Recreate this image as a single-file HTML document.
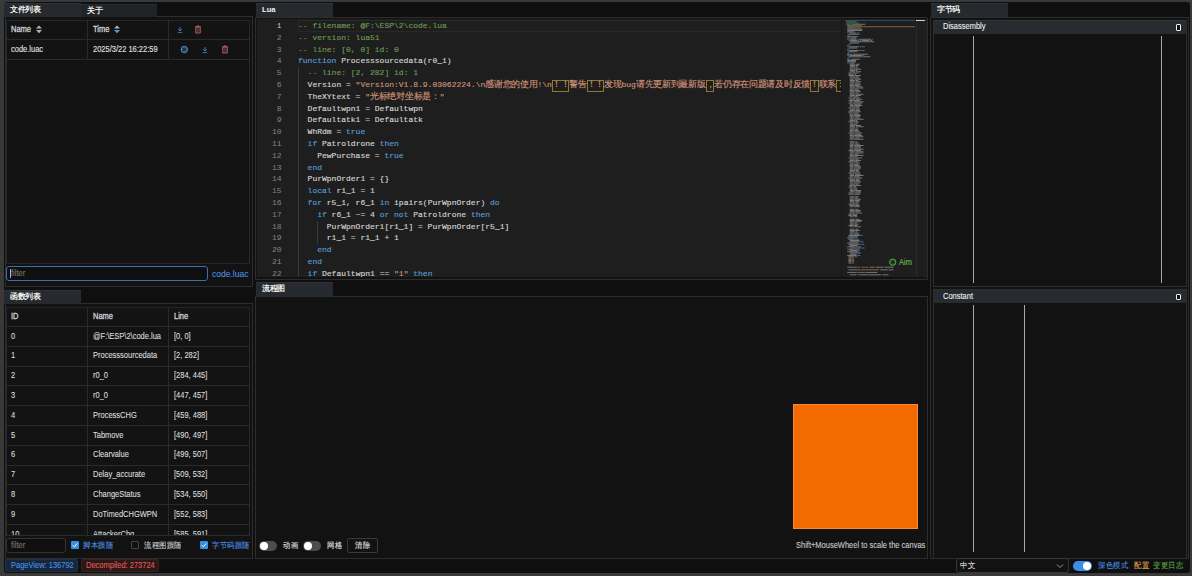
<!DOCTYPE html><html><head><meta charset="utf-8"><style>
*{box-sizing:border-box;margin:0;padding:0}
html,body{width:1192px;height:576px;overflow:hidden;background:#393939;font-family:"Liberation Sans",sans-serif;color:#dedede}
div,span{position:absolute}
.r{position:relative}
.bx{border:1px solid #2d2d2d}
.tab{background:#262a2e;font-size:7.6px;font-weight:bold;color:#f2f2f2;line-height:12px;padding-left:6px;white-space:nowrap;border-top:1px solid #30343a}
.tab.in{background:#212427;border-top:1px solid #2a2d31}
.t{font-size:8.2px;line-height:9px;white-space:nowrap;color:#e2e2e2;-webkit-text-stroke:0.1px currentColor;transform:scaleX(0.915);transform-origin:0 50%}
.hl{height:1px;background:#2a2a2a}
.vl{width:1px;background:#2a2a2a}
.code{font-family:"Liberation Mono",monospace;font-size:8px;line-height:11.8px;white-space:pre;color:#d4d4d4;-webkit-text-stroke:0.15px currentColor}
.ln{font-family:"Liberation Mono",monospace;font-size:8px;line-height:11.8px;white-space:pre;color:#858585;text-align:right;width:24.5px}
.c{color:#6a9955}.k{color:#569cd6}.s{color:#ce9178}.f{color:#dcdcaa}
.cj{position:relative;display:inline-block;width:1em;text-align:center}
.code .cj{width:8.71px}
.ub{outline:1px solid #8d7b2c;outline-offset:-1px;color:#ce9178}
</style></head><body>
<div style="left:4px;top:2px;width:1186px;height:571px;background:#0f0f0f;border-radius:3px"></div>
<div class="bx" style="left:5px;top:16px;width:248px;height:271px;background:#121212"></div>
<div class="tab" style="left:4px;top:3px;width:77px;height:14px"><span class="cj">文</span><span class="cj">件</span><span class="cj">列</span><span class="cj">表</span></div>
<div class="tab in" style="left:81px;top:4px;width:76px;height:13px"><span class="cj">关</span><span class="cj">于</span></div>
<div style="left:6px;top:20px;width:244px;height:244px;border:1px solid #262626;background:#131313"></div>
<div class="hl" style="left:6px;top:39px;width:244px"></div>
<div class="hl" style="left:6px;top:59px;width:244px"></div>
<div class="vl" style="left:87px;top:20px;height:40px"></div>
<div class="vl" style="left:168px;top:20px;height:40px"></div>
<div class="t" style="left:11px;top:25px;color:#d0d3dc;-webkit-text-stroke:0.3px #d0d3dc">Name</div>
<div class="t" style="left:93px;top:25px;color:#d0d3dc;-webkit-text-stroke:0.3px #d0d3dc">Time</div>
<div class="t" style="left:11px;top:45px">code.luac</div>
<div class="t" style="left:93px;top:45px">2025/3/22 16:22:59</div>
<svg style="position:absolute;left:35.0px;top:25.0px" width="8" height="9"><path d="M1 3.6 L4 0.4 L7 3.6Z" fill="#b4b4b4"/><path d="M1 5 L4 8.2 L7 5Z" fill="#b4b4b4"/></svg>
<svg style="position:absolute;left:113.0px;top:25.0px" width="8" height="9"><path d="M1 3.6 L4 0.4 L7 3.6Z" fill="#b4b4b4"/><path d="M1 5 L4 8.2 L7 5Z" fill="#4a9ef0"/></svg>
<svg style="position:absolute;left:175.5px;top:25.5px" width="8" height="8"><path d="M4 1 V5 M2.3 3.3 L4 5 L5.7 3.3" stroke="#4a88cc" stroke-width="0.9" fill="none"/><path d="M1.8 6.6 H6.2" stroke="#4a88cc" stroke-width="0.8"/></svg>
<svg style="position:absolute;left:194.0px;top:25.0px" width="8" height="9"><path d="M1.7 2.2 H6.3 V8 H1.7Z" stroke="#b85a5a" stroke-width="0.9" fill="#3a2828"/><path d="M1.1 1.6 H6.9 M3 0.8 H5" stroke="#b85a5a" stroke-width="0.9"/><path d="M3 4.2 H5 M3 5.8 H5" stroke="#6a4a4a" stroke-width="0.7"/></svg>
<svg style="position:absolute;left:180px;top:45px" width="9" height="9"><circle cx="4.3" cy="4.5" r="3.2" fill="#34587e" stroke="#4f88c4" stroke-width="1"/><path d="M2.6 2.8 L6 6.2 M6 2.8 L2.6 6.2" stroke="#0d1620" stroke-width="1"/></svg>
<svg style="position:absolute;left:200.5px;top:45.5px" width="8" height="8"><path d="M4 1 V5 M2.3 3.3 L4 5 L5.7 3.3" stroke="#4a88cc" stroke-width="0.9" fill="none"/><path d="M1.8 6.6 H6.2" stroke="#4a88cc" stroke-width="0.8"/></svg>
<svg style="position:absolute;left:221.0px;top:45.0px" width="8" height="9"><path d="M1.7 2.2 H6.3 V8 H1.7Z" stroke="#b85a5a" stroke-width="0.9" fill="#3a2828"/><path d="M1.1 1.6 H6.9 M3 0.8 H5" stroke="#b85a5a" stroke-width="0.9"/><path d="M3 4.2 H5 M3 5.8 H5" stroke="#6a4a4a" stroke-width="0.7"/></svg>
<div style="left:6px;top:266px;width:202px;height:15px;border:1px solid #3b6fb0;border-radius:3px;background:#0f0f0f"></div>
<div class="t" style="left:11px;top:269px;color:#777">filter</div>
<div class="t" style="left:212px;top:269.5px;color:#4d8ee0;font-size:9.3px">code.luac</div>
<div style="left:10px;top:269px;width:1px;height:9px;background:#bbb"></div>
<div class="bx" style="left:5px;top:303px;width:248px;height:256px;background:#121212"></div>
<div class="tab" style="left:4px;top:290px;width:77px;height:14px"><span class="cj">函</span><span class="cj">数</span><span class="cj">列</span><span class="cj">表</span></div>
<div style="left:6px;top:307px;width:244px;height:229px;border:1px solid #262626;background:#131313;overflow:hidden"></div>
<div class="t" style="left:11px;top:312.0px;color:#d0d3dc;-webkit-text-stroke:0.3px #d0d3dc">ID</div>
<div class="t" style="left:93px;top:312.0px;color:#d0d3dc;-webkit-text-stroke:0.3px #d0d3dc">Name</div>
<div class="t" style="left:174px;top:312.0px;color:#d0d3dc;-webkit-text-stroke:0.3px #d0d3dc">Line</div>
<div class="t" style="left:11px;top:331.5px;color:#dcdcdc">0</div>
<div class="t" style="left:93px;top:331.5px;color:#dcdcdc">@F:\ESP\2\code.lua</div>
<div class="t" style="left:174px;top:331.5px;color:#dcdcdc">[0, 0]</div>
<div class="hl" style="left:6px;top:326.0px;width:244px"></div>
<div class="t" style="left:11px;top:351.3px;color:#dcdcdc">1</div>
<div class="t" style="left:93px;top:351.3px;color:#dcdcdc">Processsourcedata</div>
<div class="t" style="left:174px;top:351.3px;color:#dcdcdc">[2, 282]</div>
<div class="hl" style="left:6px;top:345.8px;width:244px"></div>
<div class="t" style="left:11px;top:371.1px;color:#dcdcdc">2</div>
<div class="t" style="left:93px;top:371.1px;color:#dcdcdc">r0_0</div>
<div class="t" style="left:174px;top:371.1px;color:#dcdcdc">[284, 445]</div>
<div class="hl" style="left:6px;top:365.6px;width:244px"></div>
<div class="t" style="left:11px;top:390.9px;color:#dcdcdc">3</div>
<div class="t" style="left:93px;top:390.9px;color:#dcdcdc">r0_0</div>
<div class="t" style="left:174px;top:390.9px;color:#dcdcdc">[447, 457]</div>
<div class="hl" style="left:6px;top:385.4px;width:244px"></div>
<div class="t" style="left:11px;top:410.7px;color:#dcdcdc">4</div>
<div class="t" style="left:93px;top:410.7px;color:#dcdcdc">ProcessCHG</div>
<div class="t" style="left:174px;top:410.7px;color:#dcdcdc">[459, 488]</div>
<div class="hl" style="left:6px;top:405.2px;width:244px"></div>
<div class="t" style="left:11px;top:430.5px;color:#dcdcdc">5</div>
<div class="t" style="left:93px;top:430.5px;color:#dcdcdc">Tabmove</div>
<div class="t" style="left:174px;top:430.5px;color:#dcdcdc">[490, 497]</div>
<div class="hl" style="left:6px;top:425.0px;width:244px"></div>
<div class="t" style="left:11px;top:450.3px;color:#dcdcdc">6</div>
<div class="t" style="left:93px;top:450.3px;color:#dcdcdc">Clearvalue</div>
<div class="t" style="left:174px;top:450.3px;color:#dcdcdc">[499, 507]</div>
<div class="hl" style="left:6px;top:444.8px;width:244px"></div>
<div class="t" style="left:11px;top:470.1px;color:#dcdcdc">7</div>
<div class="t" style="left:93px;top:470.1px;color:#dcdcdc">Delay_accurate</div>
<div class="t" style="left:174px;top:470.1px;color:#dcdcdc">[509, 532]</div>
<div class="hl" style="left:6px;top:464.6px;width:244px"></div>
<div class="t" style="left:11px;top:489.9px;color:#dcdcdc">8</div>
<div class="t" style="left:93px;top:489.9px;color:#dcdcdc">ChangeStatus</div>
<div class="t" style="left:174px;top:489.9px;color:#dcdcdc">[534, 550]</div>
<div class="hl" style="left:6px;top:484.4px;width:244px"></div>
<div class="t" style="left:11px;top:509.7px;color:#dcdcdc">9</div>
<div class="t" style="left:93px;top:509.7px;color:#dcdcdc">DoTimedCHGWPN</div>
<div class="t" style="left:174px;top:509.7px;color:#dcdcdc">[552, 583]</div>
<div class="hl" style="left:6px;top:504.2px;width:244px"></div>
<div class="t" style="left:11px;top:529.5px;color:#dcdcdc">10</div>
<div class="t" style="left:93px;top:529.5px;color:#dcdcdc">AttackerChg</div>
<div class="t" style="left:174px;top:529.5px;color:#dcdcdc">[585, 591]</div>
<div class="hl" style="left:6px;top:524.0px;width:244px"></div>
<div class="vl" style="left:87px;top:307px;height:229px"></div>
<div class="vl" style="left:168px;top:307px;height:229px"></div>
<div style="left:6px;top:536px;width:244px;height:21px;background:#121212"></div>
<div class="hl" style="left:6px;top:535px;width:244px"></div>
<div style="left:6px;top:538px;width:60px;height:15px;border:1px solid #333;border-radius:3px;background:#0f0f0f"></div>
<div class="t" style="left:11px;top:541px;color:#777">filter</div>
<div style="left:71px;top:541px;width:8px;height:8px;background:#3a8ee6;border-radius:1px"></div>
<svg style="position:absolute;left:71px;top:541px" width="8" height="8"><path d="M1.8 4.2 L3.4 5.8 L6.3 2.4" stroke="#fff" stroke-width="1" fill="none"/></svg>
<div class="t" style="left:83px;top:541px;color:#4d8ee0"><span class="cj">脚</span><span class="cj">本</span><span class="cj">跟</span><span class="cj">随</span></div>
<div style="left:131px;top:541px;width:8px;height:8px;border:1px solid #444;border-radius:1px;background:#111"></div>
<div class="t" style="left:144px;top:541px;color:#cfcfcf"><span class="cj">流</span><span class="cj">程</span><span class="cj">图</span><span class="cj">跟</span><span class="cj">随</span></div>
<div style="left:200px;top:541px;width:8px;height:8px;background:#3a8ee6;border-radius:1px"></div>
<svg style="position:absolute;left:200px;top:541px" width="8" height="8"><path d="M1.8 4.2 L3.4 5.8 L6.3 2.4" stroke="#fff" stroke-width="1" fill="none"/></svg>
<div class="t" style="left:212px;top:541px;color:#4d8ee0"><span class="cj">字</span><span class="cj">节</span><span class="cj">码</span><span class="cj">跟</span><span class="cj">随</span></div>
<div class="bx" style="left:255px;top:17px;width:673px;height:263px;background:#121212;border-radius:0 2px 0 0"></div>
<div class="tab" style="left:256px;top:3px;width:77px;height:14px;font-weight:bold">Lua</div>
<div style="left:257px;top:19px;width:659px;height:258px;background:#1e1e1e;overflow:hidden" id="ed"></div>
<div style="left:257px;top:19px;width:659px;height:258px;overflow:hidden">
<div style="left:41px;top:1px;width:546px;height:11.8px;border:1px solid #282828"></div>
<div style="left:41px;top:48.2px;width:1px;height:220px;background:#3a3a3a"></div>
<div style="left:60.2px;top:201.60px;width:1px;height:23.6px;background:#3a3a3a"></div>
<div class="ln" style="left:0px;top:1.00px;color:#c6c6c6">1</div>
<div class="code" style="left:41px;top:1.00px"><span class="r c">-- filename: @F:\ESP\2\code.lua</span></div>
<div class="ln" style="left:0px;top:12.80px;color:#858585">2</div>
<div class="code" style="left:41px;top:12.80px"><span class="r c">-- version: lua51</span></div>
<div class="ln" style="left:0px;top:24.60px;color:#858585">3</div>
<div class="code" style="left:41px;top:24.60px"><span class="r c">-- line: [0, 0] id: 0</span></div>
<div class="ln" style="left:0px;top:36.40px;color:#858585">4</div>
<div class="code" style="left:41px;top:36.40px"><span class="r k">function</span> Processsourcedata(r0_1)</div>
<div class="ln" style="left:0px;top:48.20px;color:#858585">5</div>
<div class="code" style="left:41px;top:48.20px">  <span class="r c">-- line: [2, 282] id: 1</span></div>
<div class="ln" style="left:0px;top:60.00px;color:#858585">6</div>
<div class="code" style="left:41px;top:60.00px">  Version = <span class="r s">&quot;Version:V1.8.9.03062224.\n<span class="r" style="font-size:8.7px"><span class="cj">感</span><span class="cj">谢</span><span class="cj">您</span><span class="cj">的</span><span class="cj">使</span><span class="cj">用</span></span>!\n</span><span class="r ub"><span class="r" style="font-size:8.7px"><span class="cj">！</span><span class="cj">！</span></span></span><span class="r s"><span class="r" style="font-size:8.7px"><span class="cj">警</span><span class="cj">告</span></span></span><span class="r ub"><span class="r" style="font-size:8.7px"><span class="cj">！</span><span class="cj">！</span></span></span><span class="r s"><span class="r" style="font-size:8.7px"><span class="cj">发</span><span class="cj">现</span></span>bug<span class="r" style="font-size:8.7px"><span class="cj">请</span><span class="cj">先</span><span class="cj">更</span><span class="cj">新</span><span class="cj">到</span><span class="cj">最</span><span class="cj">新</span><span class="cj">版</span></span></span><span class="r ub"><span class="r" style="font-size:8.7px"><span class="cj">，</span></span></span><span class="r s"><span class="r" style="font-size:8.7px"><span class="cj">若</span><span class="cj">仍</span><span class="cj">存</span><span class="cj">在</span><span class="cj">问</span><span class="cj">题</span><span class="cj">请</span><span class="cj">及</span><span class="cj">时</span><span class="cj">反</span><span class="cj">馈</span></span></span><span class="r ub"><span class="r" style="font-size:8.7px"><span class="cj">！</span></span></span><span class="r s"><span class="r" style="font-size:8.7px"><span class="cj">联</span><span class="cj">系</span></span></span><span class="r ub"><span class="r" style="font-size:8.7px"><span class="cj">：</span></span></span><span class="r s">QQ<span class="r" style="font-size:8.7px"><span class="cj">群</span></span></span></div>
<div class="ln" style="left:0px;top:71.80px;color:#858585">7</div>
<div class="code" style="left:41px;top:71.80px">  TheXYtext = <span class="r s">&quot;<span class="r" style="font-size:8.7px"><span class="cj">光</span><span class="cj">标</span><span class="cj">绝</span><span class="cj">对</span><span class="cj">坐</span><span class="cj">标</span><span class="cj">是</span><span class="cj">：</span></span>&quot;</span></div>
<div class="ln" style="left:0px;top:83.60px;color:#858585">8</div>
<div class="code" style="left:41px;top:83.60px">  Defaultwpn1 = Defaultwpn</div>
<div class="ln" style="left:0px;top:95.40px;color:#858585">9</div>
<div class="code" style="left:41px;top:95.40px">  Defaultatk1 = Defaultatk</div>
<div class="ln" style="left:0px;top:107.20px;color:#858585">10</div>
<div class="code" style="left:41px;top:107.20px">  WhRdm = <span class="r k">true</span></div>
<div class="ln" style="left:0px;top:119.00px;color:#858585">11</div>
<div class="code" style="left:41px;top:119.00px">  <span class="r k">if</span> Patroldrone <span class="r k">then</span></div>
<div class="ln" style="left:0px;top:130.80px;color:#858585">12</div>
<div class="code" style="left:41px;top:130.80px">    PewPurchase = <span class="r k">true</span></div>
<div class="ln" style="left:0px;top:142.60px;color:#858585">13</div>
<div class="code" style="left:41px;top:142.60px">  <span class="r k">end</span></div>
<div class="ln" style="left:0px;top:154.40px;color:#858585">14</div>
<div class="code" style="left:41px;top:154.40px">  PurWpnOrder1 = {}</div>
<div class="ln" style="left:0px;top:166.20px;color:#858585">15</div>
<div class="code" style="left:41px;top:166.20px">  <span class="r k">local</span> r1_1 = 1</div>
<div class="ln" style="left:0px;top:178.00px;color:#858585">16</div>
<div class="code" style="left:41px;top:178.00px">  <span class="r k">for</span> r5_1, r6_1 <span class="r k">in</span> ipairs(PurWpnOrder) <span class="r k">do</span></div>
<div class="ln" style="left:0px;top:189.80px;color:#858585">17</div>
<div class="code" style="left:41px;top:189.80px">    <span class="r k">if</span> r6_1 ~= 4 <span class="r k">or</span> <span class="r k">not</span> Patroldrone <span class="r k">then</span></div>
<div class="ln" style="left:0px;top:201.60px;color:#858585">18</div>
<div class="code" style="left:41px;top:201.60px">      PurWpnOrder1[r1_1] = PurWpnOrder[r5_1]</div>
<div class="ln" style="left:0px;top:213.40px;color:#858585">19</div>
<div class="code" style="left:41px;top:213.40px">      r1_1 = r1_1 + 1</div>
<div class="ln" style="left:0px;top:225.20px;color:#858585">20</div>
<div class="code" style="left:41px;top:225.20px">    <span class="r k">end</span></div>
<div class="ln" style="left:0px;top:237.00px;color:#858585">21</div>
<div class="code" style="left:41px;top:237.00px">  <span class="r k">end</span></div>
<div class="ln" style="left:0px;top:248.80px;color:#858585">22</div>
<div class="code" style="left:41px;top:248.80px">  <span class="r k">if</span> Defaultwpn1 == <span class="r s">&quot;1&quot;</span> <span class="r k">then</span></div>
<div class="ln" style="left:0px;top:260.60px;color:#858585">23</div>
<div class="code" style="left:41px;top:260.60px">    Defaultwpn = 1</div>
</div>
<div style="left:916px;top:19px;width:11px;height:258px;background:#1e1e1e;border-left:1px solid #2a2a2a"></div>
<div style="left:841px;top:19px;width:75px;height:258px;background:#1e1e1e;border-left:1px solid #181818"></div>
<div style="left:845px;top:19px;width:71px;height:258px;overflow:hidden"><div style="left:-845px;top:-19px;width:1192px;height:576px"><svg style="position:absolute;left:0;top:0" width="1192" height="576"><rect x="846.00" y="20.00" width="19.38" height="1" fill="#5f8a4e" opacity="0.7"/><rect x="846.00" y="21.25" width="10.62" height="1" fill="#5f8a4e" opacity="0.7"/><rect x="846.00" y="22.50" width="13.12" height="1" fill="#5f8a4e" opacity="0.7"/><rect x="846.00" y="23.75" width="5.00" height="1" fill="#4f8ccc" opacity="0.7"/><rect x="851.62" y="23.75" width="13.75" height="1" fill="#9b9b9b" opacity="0.7"/><rect x="847.25" y="25.00" width="14.38" height="1" fill="#5f8a4e" opacity="0.7"/><rect x="847.25" y="26.25" width="6.25" height="1" fill="#9b9b9b" opacity="0.7"/><rect x="853.50" y="26.25" width="61.50" height="1" fill="#b77a5e" opacity="0.7"/><rect x="847.25" y="27.50" width="7.50" height="1" fill="#9b9b9b" opacity="0.7"/><rect x="854.75" y="27.50" width="6.25" height="1" fill="#b77a5e" opacity="0.7"/><rect x="847.25" y="28.75" width="15.00" height="1" fill="#9b9b9b" opacity="0.7"/><rect x="847.25" y="30.00" width="15.00" height="1" fill="#9b9b9b" opacity="0.7"/><rect x="847.25" y="31.25" width="5.00" height="1" fill="#9b9b9b" opacity="0.7"/><rect x="852.25" y="31.25" width="2.50" height="1" fill="#4f8ccc" opacity="0.7"/><rect x="847.25" y="32.50" width="1.25" height="1" fill="#4f8ccc" opacity="0.7"/><rect x="849.12" y="32.50" width="6.88" height="1" fill="#9b9b9b" opacity="0.7"/><rect x="856.62" y="32.50" width="2.50" height="1" fill="#4f8ccc" opacity="0.7"/><rect x="848.50" y="33.75" width="8.75" height="1" fill="#9b9b9b" opacity="0.7"/><rect x="857.25" y="33.75" width="2.50" height="1" fill="#4f8ccc" opacity="0.7"/><rect x="847.25" y="35.00" width="1.88" height="1" fill="#4f8ccc" opacity="0.7"/><rect x="847.25" y="36.25" width="10.62" height="1" fill="#9b9b9b" opacity="0.7"/><rect x="847.25" y="37.50" width="3.12" height="1" fill="#4f8ccc" opacity="0.7"/><rect x="851.00" y="37.50" width="5.00" height="1" fill="#9b9b9b" opacity="0.7"/><rect x="847.25" y="38.75" width="1.88" height="1" fill="#4f8ccc" opacity="0.7"/><rect x="849.75" y="38.75" width="6.88" height="1" fill="#9b9b9b" opacity="0.7"/><rect x="857.25" y="38.75" width="1.25" height="1" fill="#4f8ccc" opacity="0.7"/><rect x="859.12" y="38.75" width="11.88" height="1" fill="#9b9b9b" opacity="0.7"/><rect x="871.62" y="38.75" width="1.25" height="1" fill="#4f8ccc" opacity="0.7"/><rect x="848.50" y="40.00" width="1.25" height="1" fill="#4f8ccc" opacity="0.7"/><rect x="850.38" y="40.00" width="6.88" height="1" fill="#9b9b9b" opacity="0.7"/><rect x="857.88" y="40.00" width="1.25" height="1" fill="#4f8ccc" opacity="0.7"/><rect x="859.75" y="40.00" width="1.88" height="1" fill="#4f8ccc" opacity="0.7"/><rect x="862.25" y="40.00" width="6.88" height="1" fill="#9b9b9b" opacity="0.7"/><rect x="869.75" y="40.00" width="2.50" height="1" fill="#4f8ccc" opacity="0.7"/><rect x="849.75" y="41.25" width="24.38" height="1" fill="#9b9b9b" opacity="0.7"/><rect x="849.75" y="42.50" width="9.38" height="1" fill="#9b9b9b" opacity="0.7"/><rect x="848.50" y="43.75" width="1.88" height="1" fill="#4f8ccc" opacity="0.7"/><rect x="847.25" y="45.00" width="1.88" height="1" fill="#4f8ccc" opacity="0.7"/><rect x="847.25" y="46.25" width="1.25" height="1" fill="#4f8ccc" opacity="0.7"/><rect x="849.12" y="46.25" width="10.00" height="1" fill="#9b9b9b" opacity="0.7"/><rect x="859.75" y="46.25" width="1.88" height="1" fill="#b77a5e" opacity="0.7"/><rect x="862.25" y="46.25" width="2.50" height="1" fill="#4f8ccc" opacity="0.7"/><rect x="848.50" y="47.50" width="8.75" height="1" fill="#9b9b9b" opacity="0.7"/><rect x="847.25" y="48.75" width="1.88" height="1" fill="#4f8ccc" opacity="0.7"/><rect x="847.25" y="50.00" width="1.25" height="1" fill="#4f8ccc" opacity="0.7"/><rect x="849.12" y="50.00" width="10.00" height="1" fill="#9b9b9b" opacity="0.7"/><rect x="859.75" y="50.00" width="1.88" height="1" fill="#b77a5e" opacity="0.7"/><rect x="862.25" y="50.00" width="2.50" height="1" fill="#4f8ccc" opacity="0.7"/><rect x="848.50" y="51.25" width="8.75" height="1" fill="#9b9b9b" opacity="0.7"/><rect x="847.25" y="52.50" width="1.88" height="1" fill="#4f8ccc" opacity="0.7"/><rect x="847.25" y="53.75" width="5.00" height="1" fill="#9b9b9b" opacity="0.7"/><rect x="852.88" y="53.75" width="15.00" height="1" fill="#9b9b9b" opacity="0.7"/><rect x="847.25" y="55.00" width="1.88" height="1" fill="#4f8ccc" opacity="0.7"/><rect x="849.75" y="55.00" width="12.50" height="1" fill="#9b9b9b" opacity="0.7"/><rect x="862.88" y="55.00" width="1.25" height="1" fill="#4f8ccc" opacity="0.7"/><rect x="848.50" y="56.25" width="13.75" height="1" fill="#9b9b9b" opacity="0.7"/><rect x="862.88" y="56.25" width="7.50" height="1" fill="#9b9b9b" opacity="0.7"/><rect x="847.25" y="57.50" width="1.88" height="1" fill="#4f8ccc" opacity="0.7"/><rect x="847.25" y="58.75" width="3.12" height="1" fill="#4f8ccc" opacity="0.7"/><rect x="851.00" y="58.75" width="8.75" height="1" fill="#9b9b9b" opacity="0.7"/><rect x="847.25" y="60.00" width="8.75" height="1" fill="#9b9b9b" opacity="0.7"/><rect x="847.25" y="61.25" width="8.75" height="1" fill="#9b9b9b" opacity="0.7"/><rect x="847.25" y="62.50" width="1.88" height="1" fill="#4f8ccc" opacity="0.7"/><rect x="849.75" y="62.50" width="5.00" height="1" fill="#9b9b9b" opacity="0.7"/><rect x="849.75" y="63.75" width="5.00" height="1" fill="#9b9b9b" opacity="0.7"/><rect x="855.38" y="63.75" width="4.38" height="1" fill="#9b9b9b" opacity="0.7"/><rect x="849.75" y="65.00" width="5.62" height="1" fill="#9b9b9b" opacity="0.7"/><rect x="856.00" y="65.00" width="2.50" height="1" fill="#9b9b9b" opacity="0.7"/><rect x="849.75" y="66.25" width="5.62" height="1" fill="#9b9b9b" opacity="0.7"/><rect x="856.00" y="66.25" width="1.25" height="1" fill="#9b9b9b" opacity="0.7"/><rect x="849.75" y="67.50" width="5.00" height="1" fill="#9b9b9b" opacity="0.7"/><rect x="855.38" y="67.50" width="3.12" height="1" fill="#9b9b9b" opacity="0.7"/><rect x="849.75" y="68.75" width="3.12" height="1" fill="#9b9b9b" opacity="0.7"/><rect x="853.50" y="68.75" width="7.50" height="1" fill="#9b9b9b" opacity="0.7"/><rect x="849.75" y="70.00" width="5.62" height="1" fill="#9b9b9b" opacity="0.7"/><rect x="856.00" y="70.00" width="1.25" height="1" fill="#9b9b9b" opacity="0.7"/><rect x="849.75" y="71.25" width="5.62" height="1" fill="#9b9b9b" opacity="0.7"/><rect x="856.00" y="71.25" width="5.00" height="1" fill="#9b9b9b" opacity="0.7"/><rect x="848.50" y="72.50" width="3.12" height="1" fill="#9b9b9b" opacity="0.7"/><rect x="852.25" y="72.50" width="6.25" height="1" fill="#9b9b9b" opacity="0.7"/><rect x="848.50" y="73.75" width="5.62" height="1" fill="#9b9b9b" opacity="0.7"/><rect x="854.75" y="73.75" width="1.25" height="1" fill="#9b9b9b" opacity="0.7"/><rect x="848.50" y="75.00" width="5.00" height="1" fill="#9b9b9b" opacity="0.7"/><rect x="854.12" y="75.00" width="6.88" height="1" fill="#9b9b9b" opacity="0.7"/><rect x="849.75" y="76.25" width="5.62" height="1" fill="#9b9b9b" opacity="0.7"/><rect x="856.00" y="76.25" width="2.50" height="1" fill="#9b9b9b" opacity="0.7"/><rect x="849.75" y="77.50" width="3.12" height="1" fill="#9b9b9b" opacity="0.7"/><rect x="853.50" y="77.50" width="6.25" height="1" fill="#9b9b9b" opacity="0.7"/><rect x="849.75" y="78.75" width="4.38" height="1" fill="#9b9b9b" opacity="0.7"/><rect x="854.75" y="78.75" width="6.25" height="1" fill="#9b9b9b" opacity="0.7"/><rect x="849.75" y="80.00" width="5.62" height="1" fill="#9b9b9b" opacity="0.7"/><rect x="856.00" y="80.00" width="2.50" height="1" fill="#9b9b9b" opacity="0.7"/><rect x="849.75" y="81.25" width="5.00" height="1" fill="#9b9b9b" opacity="0.7"/><rect x="855.38" y="81.25" width="5.62" height="1" fill="#9b9b9b" opacity="0.7"/><rect x="849.75" y="82.50" width="4.38" height="1" fill="#9b9b9b" opacity="0.7"/><rect x="854.75" y="82.50" width="5.00" height="1" fill="#9b9b9b" opacity="0.7"/><rect x="849.75" y="83.75" width="4.38" height="1" fill="#9b9b9b" opacity="0.7"/><rect x="854.75" y="83.75" width="6.25" height="1" fill="#9b9b9b" opacity="0.7"/><rect x="849.75" y="85.00" width="3.75" height="1" fill="#9b9b9b" opacity="0.7"/><rect x="854.12" y="85.00" width="5.62" height="1" fill="#9b9b9b" opacity="0.7"/><rect x="849.75" y="86.25" width="5.62" height="1" fill="#9b9b9b" opacity="0.7"/><rect x="856.00" y="86.25" width="6.25" height="1" fill="#9b9b9b" opacity="0.7"/><rect x="849.75" y="87.50" width="5.00" height="1" fill="#9b9b9b" opacity="0.7"/><rect x="855.38" y="87.50" width="8.12" height="1" fill="#9b9b9b" opacity="0.7"/><rect x="849.75" y="88.75" width="3.12" height="1" fill="#9b9b9b" opacity="0.7"/><rect x="853.50" y="88.75" width="5.00" height="1" fill="#9b9b9b" opacity="0.7"/><rect x="849.75" y="90.00" width="4.38" height="1" fill="#9b9b9b" opacity="0.7"/><rect x="854.75" y="90.00" width="5.00" height="1" fill="#9b9b9b" opacity="0.7"/><rect x="849.75" y="91.25" width="5.00" height="1" fill="#9b9b9b" opacity="0.7"/><rect x="855.38" y="91.25" width="5.62" height="1" fill="#9b9b9b" opacity="0.7"/><rect x="849.75" y="92.50" width="5.62" height="1" fill="#9b9b9b" opacity="0.7"/><rect x="856.00" y="92.50" width="2.50" height="1" fill="#9b9b9b" opacity="0.7"/><rect x="849.75" y="93.75" width="4.38" height="1" fill="#9b9b9b" opacity="0.7"/><rect x="854.75" y="93.75" width="8.75" height="1" fill="#9b9b9b" opacity="0.7"/><rect x="849.75" y="95.00" width="5.62" height="1" fill="#9b9b9b" opacity="0.7"/><rect x="856.00" y="95.00" width="5.00" height="1" fill="#9b9b9b" opacity="0.7"/><rect x="849.75" y="96.25" width="3.12" height="1" fill="#9b9b9b" opacity="0.7"/><rect x="853.50" y="96.25" width="5.00" height="1" fill="#9b9b9b" opacity="0.7"/><rect x="848.50" y="97.50" width="3.12" height="1" fill="#9b9b9b" opacity="0.7"/><rect x="852.25" y="97.50" width="7.50" height="1" fill="#9b9b9b" opacity="0.7"/><rect x="849.75" y="98.75" width="5.62" height="1" fill="#9b9b9b" opacity="0.7"/><rect x="856.00" y="98.75" width="6.25" height="1" fill="#9b9b9b" opacity="0.7"/><rect x="848.50" y="100.00" width="4.38" height="1" fill="#9b9b9b" opacity="0.7"/><rect x="853.50" y="100.00" width="6.25" height="1" fill="#9b9b9b" opacity="0.7"/><rect x="849.75" y="101.25" width="3.12" height="1" fill="#9b9b9b" opacity="0.7"/><rect x="853.50" y="101.25" width="10.00" height="1" fill="#9b9b9b" opacity="0.7"/><rect x="848.50" y="102.50" width="3.75" height="1" fill="#9b9b9b" opacity="0.7"/><rect x="852.88" y="102.50" width="9.38" height="1" fill="#9b9b9b" opacity="0.7"/><rect x="849.75" y="103.75" width="3.12" height="1" fill="#9b9b9b" opacity="0.7"/><rect x="853.50" y="103.75" width="7.50" height="1" fill="#9b9b9b" opacity="0.7"/><rect x="849.75" y="105.00" width="3.75" height="1" fill="#9b9b9b" opacity="0.7"/><rect x="854.12" y="105.00" width="8.12" height="1" fill="#9b9b9b" opacity="0.7"/><rect x="849.75" y="106.25" width="5.00" height="1" fill="#9b9b9b" opacity="0.7"/><rect x="855.38" y="106.25" width="4.38" height="1" fill="#9b9b9b" opacity="0.7"/><rect x="848.50" y="107.50" width="3.12" height="1" fill="#9b9b9b" opacity="0.7"/><rect x="852.25" y="107.50" width="7.50" height="1" fill="#9b9b9b" opacity="0.7"/><rect x="849.75" y="108.75" width="5.62" height="1" fill="#9b9b9b" opacity="0.7"/><rect x="856.00" y="108.75" width="3.75" height="1" fill="#9b9b9b" opacity="0.7"/><rect x="849.75" y="110.00" width="5.00" height="1" fill="#9b9b9b" opacity="0.7"/><rect x="855.38" y="110.00" width="4.38" height="1" fill="#9b9b9b" opacity="0.7"/><rect x="848.50" y="111.25" width="5.00" height="1" fill="#9b9b9b" opacity="0.7"/><rect x="854.12" y="111.25" width="6.88" height="1" fill="#9b9b9b" opacity="0.7"/><rect x="848.50" y="112.50" width="3.75" height="1" fill="#9b9b9b" opacity="0.7"/><rect x="852.88" y="112.50" width="5.62" height="1" fill="#9b9b9b" opacity="0.7"/><rect x="849.75" y="113.75" width="3.75" height="1" fill="#9b9b9b" opacity="0.7"/><rect x="854.12" y="113.75" width="5.62" height="1" fill="#9b9b9b" opacity="0.7"/><rect x="849.75" y="115.00" width="3.12" height="1" fill="#9b9b9b" opacity="0.7"/><rect x="853.50" y="115.00" width="7.50" height="1" fill="#9b9b9b" opacity="0.7"/><rect x="849.75" y="116.25" width="4.38" height="1" fill="#9b9b9b" opacity="0.7"/><rect x="854.75" y="116.25" width="5.00" height="1" fill="#9b9b9b" opacity="0.7"/><rect x="849.75" y="117.50" width="5.00" height="1" fill="#9b9b9b" opacity="0.7"/><rect x="855.38" y="117.50" width="4.38" height="1" fill="#9b9b9b" opacity="0.7"/><rect x="849.75" y="118.75" width="3.75" height="1" fill="#9b9b9b" opacity="0.7"/><rect x="854.12" y="118.75" width="9.38" height="1" fill="#9b9b9b" opacity="0.7"/><rect x="849.75" y="120.00" width="5.00" height="1" fill="#9b9b9b" opacity="0.7"/><rect x="855.38" y="120.00" width="1.88" height="1" fill="#9b9b9b" opacity="0.7"/><rect x="848.50" y="121.25" width="5.00" height="1" fill="#9b9b9b" opacity="0.7"/><rect x="854.12" y="121.25" width="4.38" height="1" fill="#9b9b9b" opacity="0.7"/><rect x="849.75" y="122.50" width="5.00" height="1" fill="#9b9b9b" opacity="0.7"/><rect x="855.38" y="122.50" width="3.12" height="1" fill="#9b9b9b" opacity="0.7"/><rect x="849.75" y="123.75" width="3.75" height="1" fill="#9b9b9b" opacity="0.7"/><rect x="854.12" y="123.75" width="3.12" height="1" fill="#9b9b9b" opacity="0.7"/><rect x="849.75" y="125.00" width="5.00" height="1" fill="#9b9b9b" opacity="0.7"/><rect x="855.38" y="125.00" width="5.62" height="1" fill="#9b9b9b" opacity="0.7"/><rect x="849.75" y="126.25" width="5.62" height="1" fill="#9b9b9b" opacity="0.7"/><rect x="856.00" y="126.25" width="7.50" height="1" fill="#9b9b9b" opacity="0.7"/><rect x="849.75" y="127.50" width="5.62" height="1" fill="#9b9b9b" opacity="0.7"/><rect x="856.00" y="127.50" width="1.25" height="1" fill="#9b9b9b" opacity="0.7"/><rect x="849.75" y="128.75" width="4.38" height="1" fill="#9b9b9b" opacity="0.7"/><rect x="854.75" y="128.75" width="3.75" height="1" fill="#9b9b9b" opacity="0.7"/><rect x="849.75" y="130.00" width="3.75" height="1" fill="#9b9b9b" opacity="0.7"/><rect x="854.12" y="130.00" width="4.38" height="1" fill="#9b9b9b" opacity="0.7"/><rect x="849.75" y="131.25" width="4.38" height="1" fill="#9b9b9b" opacity="0.7"/><rect x="854.75" y="131.25" width="5.00" height="1" fill="#9b9b9b" opacity="0.7"/><rect x="848.50" y="132.50" width="5.00" height="1" fill="#9b9b9b" opacity="0.7"/><rect x="854.12" y="132.50" width="8.12" height="1" fill="#9b9b9b" opacity="0.7"/><rect x="849.75" y="133.75" width="5.00" height="1" fill="#9b9b9b" opacity="0.7"/><rect x="855.38" y="133.75" width="5.62" height="1" fill="#9b9b9b" opacity="0.7"/><rect x="849.75" y="135.00" width="3.12" height="1" fill="#9b9b9b" opacity="0.7"/><rect x="853.50" y="135.00" width="8.75" height="1" fill="#9b9b9b" opacity="0.7"/><rect x="849.75" y="136.25" width="4.38" height="1" fill="#9b9b9b" opacity="0.7"/><rect x="854.75" y="136.25" width="8.75" height="1" fill="#9b9b9b" opacity="0.7"/><rect x="849.75" y="137.50" width="5.62" height="1" fill="#9b9b9b" opacity="0.7"/><rect x="856.00" y="137.50" width="3.75" height="1" fill="#9b9b9b" opacity="0.7"/><rect x="849.75" y="138.75" width="3.75" height="1" fill="#9b9b9b" opacity="0.7"/><rect x="854.12" y="138.75" width="9.38" height="1" fill="#9b9b9b" opacity="0.7"/><rect x="849.75" y="141.25" width="5.62" height="1" fill="#9b9b9b" opacity="0.7"/><rect x="856.00" y="141.25" width="1.25" height="1" fill="#9b9b9b" opacity="0.7"/><rect x="849.75" y="142.50" width="4.38" height="1" fill="#9b9b9b" opacity="0.7"/><rect x="854.75" y="142.50" width="3.75" height="1" fill="#9b9b9b" opacity="0.7"/><rect x="849.75" y="143.75" width="4.38" height="1" fill="#9b9b9b" opacity="0.7"/><rect x="854.75" y="143.75" width="5.00" height="1" fill="#9b9b9b" opacity="0.7"/><rect x="849.75" y="145.00" width="3.75" height="1" fill="#9b9b9b" opacity="0.7"/><rect x="854.12" y="145.00" width="9.38" height="1" fill="#9b9b9b" opacity="0.7"/><rect x="849.75" y="146.25" width="3.75" height="1" fill="#9b9b9b" opacity="0.7"/><rect x="854.12" y="146.25" width="6.88" height="1" fill="#9b9b9b" opacity="0.7"/><rect x="849.75" y="147.50" width="3.75" height="1" fill="#9b9b9b" opacity="0.7"/><rect x="854.12" y="147.50" width="6.88" height="1" fill="#9b9b9b" opacity="0.7"/><rect x="849.75" y="148.75" width="3.12" height="1" fill="#9b9b9b" opacity="0.7"/><rect x="853.50" y="148.75" width="10.00" height="1" fill="#9b9b9b" opacity="0.7"/><rect x="848.50" y="150.00" width="5.00" height="1" fill="#9b9b9b" opacity="0.7"/><rect x="854.12" y="150.00" width="6.88" height="1" fill="#9b9b9b" opacity="0.7"/><rect x="849.75" y="151.25" width="5.00" height="1" fill="#9b9b9b" opacity="0.7"/><rect x="855.38" y="151.25" width="8.12" height="1" fill="#9b9b9b" opacity="0.7"/><rect x="849.75" y="152.50" width="4.38" height="1" fill="#9b9b9b" opacity="0.7"/><rect x="854.75" y="152.50" width="8.75" height="1" fill="#9b9b9b" opacity="0.7"/><rect x="849.75" y="153.75" width="3.75" height="1" fill="#9b9b9b" opacity="0.7"/><rect x="854.12" y="153.75" width="4.38" height="1" fill="#9b9b9b" opacity="0.7"/><rect x="849.75" y="155.00" width="3.75" height="1" fill="#9b9b9b" opacity="0.7"/><rect x="854.12" y="155.00" width="9.38" height="1" fill="#9b9b9b" opacity="0.7"/><rect x="849.75" y="156.25" width="5.00" height="1" fill="#9b9b9b" opacity="0.7"/><rect x="855.38" y="156.25" width="1.88" height="1" fill="#9b9b9b" opacity="0.7"/><rect x="848.50" y="157.50" width="3.12" height="1" fill="#9b9b9b" opacity="0.7"/><rect x="852.25" y="157.50" width="10.00" height="1" fill="#9b9b9b" opacity="0.7"/><rect x="849.75" y="158.75" width="5.00" height="1" fill="#9b9b9b" opacity="0.7"/><rect x="855.38" y="158.75" width="3.12" height="1" fill="#9b9b9b" opacity="0.7"/><rect x="849.75" y="160.00" width="5.00" height="1" fill="#9b9b9b" opacity="0.7"/><rect x="855.38" y="160.00" width="5.62" height="1" fill="#9b9b9b" opacity="0.7"/><rect x="848.50" y="161.25" width="4.38" height="1" fill="#9b9b9b" opacity="0.7"/><rect x="853.50" y="161.25" width="5.00" height="1" fill="#9b9b9b" opacity="0.7"/><rect x="849.75" y="162.50" width="5.00" height="1" fill="#9b9b9b" opacity="0.7"/><rect x="855.38" y="162.50" width="4.38" height="1" fill="#9b9b9b" opacity="0.7"/><rect x="849.75" y="163.75" width="3.75" height="1" fill="#9b9b9b" opacity="0.7"/><rect x="854.12" y="163.75" width="4.38" height="1" fill="#9b9b9b" opacity="0.7"/><rect x="849.75" y="165.00" width="3.12" height="1" fill="#9b9b9b" opacity="0.7"/><rect x="853.50" y="165.00" width="6.25" height="1" fill="#9b9b9b" opacity="0.7"/><rect x="849.75" y="166.25" width="3.75" height="1" fill="#9b9b9b" opacity="0.7"/><rect x="854.12" y="166.25" width="6.88" height="1" fill="#9b9b9b" opacity="0.7"/><rect x="849.75" y="167.50" width="4.38" height="1" fill="#9b9b9b" opacity="0.7"/><rect x="854.75" y="167.50" width="6.25" height="1" fill="#9b9b9b" opacity="0.7"/><rect x="849.75" y="168.75" width="3.12" height="1" fill="#9b9b9b" opacity="0.7"/><rect x="853.50" y="168.75" width="6.25" height="1" fill="#9b9b9b" opacity="0.7"/><rect x="849.75" y="170.00" width="5.62" height="1" fill="#9b9b9b" opacity="0.7"/><rect x="856.00" y="170.00" width="2.50" height="1" fill="#9b9b9b" opacity="0.7"/><rect x="849.75" y="171.25" width="5.00" height="1" fill="#9b9b9b" opacity="0.7"/><rect x="855.38" y="171.25" width="4.38" height="1" fill="#9b9b9b" opacity="0.7"/><rect x="848.50" y="172.50" width="3.75" height="1" fill="#9b9b9b" opacity="0.7"/><rect x="852.88" y="172.50" width="6.88" height="1" fill="#9b9b9b" opacity="0.7"/><rect x="849.75" y="173.75" width="4.38" height="1" fill="#9b9b9b" opacity="0.7"/><rect x="854.75" y="173.75" width="6.25" height="1" fill="#9b9b9b" opacity="0.7"/><rect x="849.75" y="175.00" width="4.38" height="1" fill="#9b9b9b" opacity="0.7"/><rect x="854.75" y="175.00" width="8.75" height="1" fill="#9b9b9b" opacity="0.7"/><rect x="849.75" y="176.25" width="3.12" height="1" fill="#9b9b9b" opacity="0.7"/><rect x="853.50" y="176.25" width="6.25" height="1" fill="#9b9b9b" opacity="0.7"/><rect x="848.50" y="177.50" width="5.00" height="1" fill="#9b9b9b" opacity="0.7"/><rect x="854.12" y="177.50" width="8.12" height="1" fill="#9b9b9b" opacity="0.7"/><rect x="849.75" y="178.75" width="5.62" height="1" fill="#9b9b9b" opacity="0.7"/><rect x="856.00" y="178.75" width="3.75" height="1" fill="#9b9b9b" opacity="0.7"/><rect x="849.75" y="180.00" width="5.62" height="1" fill="#9b9b9b" opacity="0.7"/><rect x="856.00" y="180.00" width="3.75" height="1" fill="#9b9b9b" opacity="0.7"/><rect x="849.75" y="181.25" width="3.75" height="1" fill="#9b9b9b" opacity="0.7"/><rect x="854.12" y="181.25" width="6.88" height="1" fill="#9b9b9b" opacity="0.7"/><rect x="849.75" y="182.50" width="3.75" height="1" fill="#9b9b9b" opacity="0.7"/><rect x="854.12" y="182.50" width="5.62" height="1" fill="#9b9b9b" opacity="0.7"/><rect x="849.75" y="183.75" width="5.62" height="1" fill="#9b9b9b" opacity="0.7"/><rect x="856.00" y="183.75" width="2.50" height="1" fill="#9b9b9b" opacity="0.7"/><rect x="849.75" y="185.00" width="3.12" height="1" fill="#9b9b9b" opacity="0.7"/><rect x="853.50" y="185.00" width="7.50" height="1" fill="#9b9b9b" opacity="0.7"/><rect x="848.50" y="186.25" width="3.75" height="1" fill="#9b9b9b" opacity="0.7"/><rect x="852.88" y="186.25" width="3.12" height="1" fill="#9b9b9b" opacity="0.7"/><rect x="849.75" y="187.50" width="3.12" height="1" fill="#9b9b9b" opacity="0.7"/><rect x="853.50" y="187.50" width="3.75" height="1" fill="#9b9b9b" opacity="0.7"/><rect x="849.75" y="188.75" width="3.12" height="1" fill="#9b9b9b" opacity="0.7"/><rect x="853.50" y="188.75" width="3.75" height="1" fill="#9b9b9b" opacity="0.7"/><rect x="849.75" y="190.00" width="4.38" height="1" fill="#9b9b9b" opacity="0.7"/><rect x="854.75" y="190.00" width="6.25" height="1" fill="#9b9b9b" opacity="0.7"/><rect x="849.75" y="191.25" width="5.62" height="1" fill="#9b9b9b" opacity="0.7"/><rect x="856.00" y="191.25" width="5.00" height="1" fill="#9b9b9b" opacity="0.7"/><rect x="848.50" y="192.50" width="5.62" height="1" fill="#9b9b9b" opacity="0.7"/><rect x="854.75" y="192.50" width="6.25" height="1" fill="#9b9b9b" opacity="0.7"/><rect x="848.50" y="193.75" width="5.00" height="1" fill="#9b9b9b" opacity="0.7"/><rect x="854.12" y="193.75" width="5.62" height="1" fill="#9b9b9b" opacity="0.7"/><rect x="849.75" y="196.25" width="5.00" height="1" fill="#9b9b9b" opacity="0.7"/><rect x="855.38" y="196.25" width="3.12" height="1" fill="#9b9b9b" opacity="0.7"/><rect x="849.75" y="197.50" width="3.75" height="1" fill="#9b9b9b" opacity="0.7"/><rect x="854.12" y="197.50" width="4.38" height="1" fill="#9b9b9b" opacity="0.7"/><rect x="849.75" y="198.75" width="4.38" height="1" fill="#9b9b9b" opacity="0.7"/><rect x="854.75" y="198.75" width="6.25" height="1" fill="#9b9b9b" opacity="0.7"/><rect x="849.75" y="200.00" width="4.38" height="1" fill="#9b9b9b" opacity="0.7"/><rect x="854.75" y="200.00" width="5.00" height="1" fill="#9b9b9b" opacity="0.7"/><rect x="849.75" y="201.25" width="5.00" height="1" fill="#9b9b9b" opacity="0.7"/><rect x="855.38" y="201.25" width="4.38" height="1" fill="#9b9b9b" opacity="0.7"/><rect x="849.75" y="202.50" width="5.00" height="1" fill="#9b9b9b" opacity="0.7"/><rect x="855.38" y="202.50" width="3.12" height="1" fill="#9b9b9b" opacity="0.7"/><rect x="848.50" y="203.75" width="3.75" height="1" fill="#9b9b9b" opacity="0.7"/><rect x="852.88" y="203.75" width="5.62" height="1" fill="#9b9b9b" opacity="0.7"/><rect x="849.75" y="205.00" width="5.62" height="1" fill="#9b9b9b" opacity="0.7"/><rect x="856.00" y="205.00" width="3.75" height="1" fill="#9b9b9b" opacity="0.7"/><rect x="849.75" y="206.25" width="3.75" height="1" fill="#9b9b9b" opacity="0.7"/><rect x="854.12" y="206.25" width="5.62" height="1" fill="#9b9b9b" opacity="0.7"/><rect x="849.75" y="208.75" width="4.38" height="1" fill="#9b9b9b" opacity="0.7"/><rect x="854.75" y="208.75" width="3.75" height="1" fill="#9b9b9b" opacity="0.7"/><rect x="849.75" y="210.00" width="5.00" height="1" fill="#9b9b9b" opacity="0.7"/><rect x="855.38" y="210.00" width="5.62" height="1" fill="#9b9b9b" opacity="0.7"/><rect x="849.75" y="211.25" width="4.38" height="1" fill="#9b9b9b" opacity="0.7"/><rect x="854.75" y="211.25" width="5.00" height="1" fill="#9b9b9b" opacity="0.7"/><rect x="849.75" y="212.50" width="5.62" height="1" fill="#9b9b9b" opacity="0.7"/><rect x="856.00" y="212.50" width="6.25" height="1" fill="#9b9b9b" opacity="0.7"/><rect x="848.50" y="213.75" width="3.75" height="1" fill="#9b9b9b" opacity="0.7"/><rect x="852.88" y="213.75" width="4.38" height="1" fill="#9b9b9b" opacity="0.7"/><rect x="848.50" y="215.00" width="3.12" height="1" fill="#9b9b9b" opacity="0.7"/><rect x="852.25" y="215.00" width="5.00" height="1" fill="#9b9b9b" opacity="0.7"/><rect x="849.75" y="216.25" width="3.75" height="1" fill="#9b9b9b" opacity="0.7"/><rect x="854.12" y="216.25" width="3.12" height="1" fill="#9b9b9b" opacity="0.7"/><rect x="849.75" y="218.75" width="5.00" height="1" fill="#9b9b9b" opacity="0.7"/><rect x="855.38" y="218.75" width="4.38" height="1" fill="#9b9b9b" opacity="0.7"/><rect x="849.75" y="220.00" width="5.00" height="1" fill="#9b9b9b" opacity="0.7"/><rect x="855.38" y="220.00" width="6.88" height="1" fill="#9b9b9b" opacity="0.7"/><rect x="849.75" y="221.25" width="4.38" height="1" fill="#9b9b9b" opacity="0.7"/><rect x="854.75" y="221.25" width="6.25" height="1" fill="#9b9b9b" opacity="0.7"/><rect x="849.75" y="222.50" width="3.75" height="1" fill="#9b9b9b" opacity="0.7"/><rect x="854.12" y="222.50" width="3.12" height="1" fill="#9b9b9b" opacity="0.7"/><rect x="849.75" y="223.75" width="4.38" height="1" fill="#9b9b9b" opacity="0.7"/><rect x="854.75" y="223.75" width="3.75" height="1" fill="#9b9b9b" opacity="0.7"/><rect x="848.50" y="225.00" width="4.38" height="1" fill="#9b9b9b" opacity="0.7"/><rect x="853.50" y="225.00" width="3.75" height="1" fill="#9b9b9b" opacity="0.7"/><rect x="849.75" y="226.25" width="3.12" height="1" fill="#9b9b9b" opacity="0.7"/><rect x="853.50" y="226.25" width="7.50" height="1" fill="#9b9b9b" opacity="0.7"/><rect x="849.75" y="228.75" width="5.00" height="1" fill="#9b9b9b" opacity="0.7"/><rect x="855.38" y="228.75" width="3.12" height="1" fill="#9b9b9b" opacity="0.7"/><rect x="849.75" y="230.00" width="4.38" height="1" fill="#9b9b9b" opacity="0.7"/><rect x="854.75" y="230.00" width="5.00" height="1" fill="#9b9b9b" opacity="0.7"/><rect x="849.75" y="231.25" width="5.62" height="1" fill="#9b9b9b" opacity="0.7"/><rect x="856.00" y="231.25" width="1.25" height="1" fill="#9b9b9b" opacity="0.7"/><rect x="849.75" y="232.50" width="3.75" height="1" fill="#9b9b9b" opacity="0.7"/><rect x="854.12" y="232.50" width="4.38" height="1" fill="#9b9b9b" opacity="0.7"/><rect x="849.75" y="233.75" width="3.75" height="1" fill="#9b9b9b" opacity="0.7"/><rect x="854.12" y="233.75" width="5.62" height="1" fill="#9b9b9b" opacity="0.7"/><rect x="848.50" y="235.00" width="11.25" height="1" fill="#9b9b9b" opacity="0.7"/><rect x="860.38" y="235.00" width="2.50" height="1" fill="#4f8ccc" opacity="0.7"/><rect x="848.50" y="236.25" width="9.38" height="1" fill="#9b9b9b" opacity="0.7"/><rect x="847.25" y="237.50" width="7.50" height="1" fill="#9b9b9b" opacity="0.7"/><rect x="855.38" y="237.50" width="1.88" height="1" fill="#4f8ccc" opacity="0.7"/><rect x="848.50" y="238.75" width="5.00" height="1" fill="#9b9b9b" opacity="0.7"/><rect x="854.12" y="238.75" width="5.00" height="1" fill="#4f8ccc" opacity="0.7"/><rect x="849.75" y="240.00" width="10.00" height="1" fill="#9b9b9b" opacity="0.7"/><rect x="849.75" y="241.25" width="9.38" height="1" fill="#9b9b9b" opacity="0.7"/><rect x="859.75" y="241.25" width="3.75" height="1" fill="#4f8ccc" opacity="0.7"/><rect x="847.25" y="242.50" width="11.25" height="1" fill="#9b9b9b" opacity="0.7"/><rect x="848.50" y="243.75" width="11.25" height="1" fill="#9b9b9b" opacity="0.7"/><rect x="860.38" y="243.75" width="3.75" height="1" fill="#4f8ccc" opacity="0.7"/><rect x="849.75" y="245.00" width="7.50" height="1" fill="#9b9b9b" opacity="0.7"/><rect x="847.25" y="246.25" width="8.12" height="1" fill="#9b9b9b" opacity="0.7"/><rect x="856.00" y="246.25" width="5.00" height="1" fill="#4f8ccc" opacity="0.7"/><rect x="849.75" y="247.50" width="11.25" height="1" fill="#9b9b9b" opacity="0.7"/><rect x="861.62" y="247.50" width="3.12" height="1" fill="#4f8ccc" opacity="0.7"/><rect x="847.25" y="248.75" width="6.25" height="1" fill="#9b9b9b" opacity="0.7"/><rect x="854.12" y="248.75" width="5.00" height="1" fill="#4f8ccc" opacity="0.7"/><rect x="849.75" y="250.00" width="7.50" height="1" fill="#9b9b9b" opacity="0.7"/><rect x="857.88" y="250.00" width="1.88" height="1" fill="#4f8ccc" opacity="0.7"/><rect x="847.25" y="251.25" width="11.25" height="1" fill="#9b9b9b" opacity="0.7"/><rect x="849.75" y="252.50" width="11.25" height="1" fill="#9b9b9b" opacity="0.7"/><rect x="849.75" y="253.75" width="6.88" height="1" fill="#9b9b9b" opacity="0.7"/><rect x="847.25" y="255.00" width="9.38" height="1" fill="#9b9b9b" opacity="0.7"/><rect x="857.25" y="255.00" width="3.12" height="1" fill="#4f8ccc" opacity="0.7"/><rect x="848.50" y="256.25" width="5.00" height="1" fill="#9b9b9b" opacity="0.7"/><rect x="854.12" y="256.25" width="3.12" height="1" fill="#4f8ccc" opacity="0.7"/><rect x="848.50" y="257.50" width="3.12" height="1" fill="#9b9b9b" opacity="0.7"/><rect x="852.25" y="257.50" width="1.88" height="1" fill="#b77a5e" opacity="0.7"/><rect x="848.50" y="258.75" width="3.12" height="1" fill="#9b9b9b" opacity="0.7"/><rect x="852.25" y="258.75" width="1.88" height="1" fill="#b77a5e" opacity="0.7"/><rect x="848.50" y="260.00" width="3.12" height="1" fill="#9b9b9b" opacity="0.7"/><rect x="852.25" y="260.00" width="1.88" height="1" fill="#b77a5e" opacity="0.7"/><rect x="848.50" y="261.25" width="3.12" height="1" fill="#9b9b9b" opacity="0.7"/><rect x="852.25" y="261.25" width="1.88" height="1" fill="#b77a5e" opacity="0.7"/><rect x="848.50" y="262.50" width="3.12" height="1" fill="#9b9b9b" opacity="0.7"/><rect x="852.25" y="262.50" width="1.88" height="1" fill="#b77a5e" opacity="0.7"/><rect x="847.25" y="266.70" width="10.00" height="1" fill="#9b9b9b" opacity="0.7"/><rect x="857.88" y="266.70" width="2.50" height="1" fill="#b77a5e" opacity="0.7"/><rect x="861.62" y="266.70" width="3.75" height="1" fill="#b77a5e" opacity="0.7"/><rect x="866.00" y="266.70" width="2.50" height="1" fill="#b77a5e" opacity="0.7"/><rect x="869.75" y="266.70" width="5.00" height="1" fill="#9b9b9b" opacity="0.7"/><rect x="876.00" y="266.70" width="7.50" height="1" fill="#9b9b9b" opacity="0.7"/><rect x="884.75" y="266.70" width="8.75" height="1" fill="#9b9b9b" opacity="0.7"/><rect x="848.50" y="269.30" width="11.25" height="1" fill="#9b9b9b" opacity="0.7"/><rect x="860.38" y="269.30" width="18.75" height="1" fill="#b77a5e" opacity="0.7"/><rect x="880.38" y="269.30" width="7.50" height="1" fill="#9b9b9b" opacity="0.7"/><rect x="888.50" y="269.30" width="5.00" height="1" fill="#9b9b9b" opacity="0.7"/><rect x="847.25" y="271.90" width="10.00" height="1" fill="#9b9b9b" opacity="0.7"/><rect x="857.88" y="271.90" width="7.50" height="1" fill="#b77a5e" opacity="0.7"/><rect x="866.00" y="271.90" width="11.25" height="1" fill="#9b9b9b" opacity="0.7"/><rect x="849.75" y="274.30" width="6.25" height="1" fill="#9b9b9b" opacity="0.7"/><rect x="856.62" y="274.30" width="1.88" height="1" fill="#4f8ccc" opacity="0.7"/><rect x="859.12" y="274.30" width="8.75" height="1" fill="#9b9b9b" opacity="0.7"/><rect x="868.50" y="274.30" width="12.50" height="1" fill="#9b9b9b" opacity="0.7"/><rect x="882.25" y="274.30" width="6.25" height="1" fill="#9b9b9b" opacity="0.7"/></svg></div></div>
<div style="left:845px;top:20px;width:70px;height:1.25px;background:#2c4a66;opacity:0.9"></div>
<div style="left:916px;top:20px;width:8.5px;height:1.2px;background:#d0d0d0"></div>
<svg style="position:absolute;left:888px;top:258px" width="9" height="9"><circle cx="4.7" cy="4.2" r="3.2" fill="#2c4a22" stroke="#5aa83a" stroke-width="1"/><path d="M3.2 2.7 L6.2 5.7 M6.2 2.7 L3.2 5.7" stroke="#101a0c" stroke-width="0.9"/></svg>
<div class="t" style="left:898.5px;top:258px;color:#6cc04a">Aim</div>
<div class="bx" style="left:255px;top:296px;width:673px;height:263px;background:#121212"></div>
<div class="tab" style="left:256px;top:282px;width:77px;height:15px"><span class="cj">流</span><span class="cj">程</span><span class="cj">图</span></div>
<div style="left:793px;top:404px;width:125px;height:125px;background:#f26a00;border:1px solid #f38a40"></div>
<div class="t" style="left:796px;top:541px;color:#c8cbd2">Shift+MouseWheel to scale the canvas</div>
<div style="left:259px;top:540.5px;width:18px;height:10px;border-radius:5px;background:#4d4d4d"></div>
<div style="left:260px;top:541.5px;width:8px;height:8px;border-radius:4px;background:#fff"></div>
<div class="t" style="left:283px;top:541px"><span class="cj">动</span><span class="cj">画</span></div>
<div style="left:303px;top:540.5px;width:18px;height:10px;border-radius:5px;background:#4d4d4d"></div>
<div style="left:304px;top:541.5px;width:8px;height:8px;border-radius:4px;background:#fff"></div>
<div class="t" style="left:327px;top:541px"><span class="cj">网</span><span class="cj">格</span></div>
<div style="left:347px;top:538px;width:31px;height:15px;border:1px solid #3a3a3a;border-radius:2px"></div>
<div class="t" style="left:355px;top:541px"><span class="cj">清</span><span class="cj">除</span></div>
<div class="bx" style="left:930px;top:17px;width:259px;height:542px;background:#121212"></div>
<div class="tab" style="left:931px;top:3px;width:77px;height:14px"><span class="cj">字</span><span class="cj">节</span><span class="cj">码</span></div>
<div class="bx" style="left:933px;top:20px;width:254px;height:267px;background:#121212"></div>
<div style="left:934px;top:20px;width:252px;height:13.5px;background:#272b2f;border-top:1px solid #33373b"></div>
<div class="t" style="left:943px;top:22px;color:#eee">Disassembly</div>
<div style="left:1175.5px;top:24px;width:5px;height:6.5px;border:1.2px solid #f0f0f0;border-radius:1px;background:#111"></div>
<div style="left:973px;top:35.5px;width:1px;height:247.5px;background:#a8a8a8"></div>
<div style="left:1161px;top:35.5px;width:1px;height:247.5px;background:#a8a8a8"></div>
<div class="bx" style="left:933px;top:289px;width:254px;height:269px;background:#121212;border-bottom:none"></div>
<div style="left:934px;top:290px;width:252px;height:13px;background:#272b2f"></div>
<div class="t" style="left:943px;top:292px;color:#eee">Constant</div>
<div style="left:1175.5px;top:293.5px;width:5px;height:6.5px;border:1.2px solid #f0f0f0;border-radius:1px;background:#111"></div>
<div style="left:973px;top:305px;width:1px;height:247px;background:#a8a8a8"></div>
<div style="left:1024px;top:305px;width:1px;height:247px;background:#a8a8a8"></div>
<div style="left:5px;top:559px;width:73px;height:12.5px;background:#17273a;border:1px solid #1f3149;border-radius:2px"></div>
<div class="t" style="left:11px;top:560.5px;color:#4a8fe0">PageView: 136792</div>
<div style="left:81px;top:559px;width:78px;height:12.5px;background:#2a1717;border:1px solid #3a2020;border-radius:2px"></div>
<div class="t" style="left:86px;top:560.5px;color:#e05a5a">Decompiled: 273724</div>
<div style="left:956px;top:558px;width:113px;height:15px;border:1px solid #363636;border-radius:3px;background:#121212"></div>
<div class="t" style="left:960px;top:561px;color:#ddd"><span class="cj">中</span><span class="cj">文</span></div>
<svg style="position:absolute;left:1056px;top:563px" width="8" height="6"><path d="M1 1.5 L4 4.5 L7 1.5" stroke="#aaa" stroke-width="0.9" fill="none"/></svg>
<div style="left:1073px;top:561px;width:19px;height:10px;border-radius:5px;background:#3a8ee6"></div>
<div style="left:1083px;top:562px;width:8px;height:8px;border-radius:4px;background:#fff"></div>
<div class="t" style="left:1098px;top:561px;color:#4a8fe0"><span class="cj">深</span><span class="cj">色</span><span class="cj">模</span><span class="cj">式</span></div>
<div class="t" style="left:1134px;top:561px;color:#e0a050"><span class="cj">配</span><span class="cj">置</span></div>
<div class="t" style="left:1153px;top:561px;color:#5aa040"><span class="cj">变</span><span class="cj">更</span><span class="cj">日</span><span class="cj">志</span></div>
</body></html>
